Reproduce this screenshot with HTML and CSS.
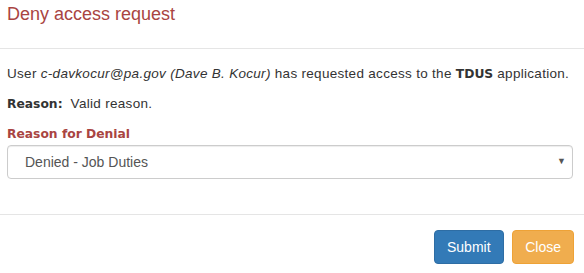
FILE: index.html
```html
<!DOCTYPE html>
<html lang="en">
<head>
    <meta charset="UTF-8">
    <title>Deny access request</title>
    <link rel="stylesheet" href="styles.css">
</head>
<body>
    <div class="modal">
        <div class="modal-header">
            <h4 class="modal-title">Deny access request</h4>
        </div>
        <div class="modal-body">
            <p class="request">User <em>c-davkocur@pa.gov (Dave B. Kocur)</em> has requested access to the <strong>TDUS</strong> application.</p>
            <p class="reason"><strong>Reason:</strong> Valid reason.</p>
            <label class="denial-label" for="denial">Reason for Denial</label>
            <div class="select-wrap">
                <select class="form-control" id="denial">
                    <option>Denied - Job Duties</option>
                </select>
                <span class="caret">&#9660;</span>
            </div>
        </div>
        <div class="modal-footer">
            <button class="btn btn-primary">Submit</button>
            <button class="btn btn-warning">Close</button>
        </div>
    </div>
</body>
</html>
```

FILE: styles.css
```css
body {
    margin: 0;
    font-family: 'Liberation Sans', Arial, sans-serif;
    font-size: 13px;
    color: #333;
    background-color: #fff;
}

.modal {
    width: 584px;
    height: 273px;
    background-color: #fff;
}

.modal-header {
    height: 48px;
    padding: 0 10px 0 7px;
    border-bottom: 1px solid #e5e5e5;
}

.modal-title {
    margin: 0;
    padding-top: 4px;
    font-size: 18px;
    font-weight: normal;
    line-height: 20px;
    color: #a94442;
}

.modal-body {
    height: 165px;
    padding: 0 11px 0 7px;
    border-bottom: 1px solid #e5e5e5;
}

.request,
.reason {
    margin: 0;
    height: 15px;
    font-size: 13.5px;
    line-height: 15px;
    letter-spacing: 0.3px;
}

.request {
    padding-top: 17px;
}

.reason {
    padding-top: 15px;
}

.reason strong {
    margin-right: 4px;
}

strong,
.denial-label {
    font-family: 'DejaVu Sans', Verdana, sans-serif;
    font-size: 12.3px;
    font-weight: bold;
    line-height: 1;
    letter-spacing: 0;
}

.denial-label {
    display: block;
    height: 15px;
    margin-top: 16px;
    line-height: 15px;
    color: #a94442;
}

.select-wrap {
    position: relative;
    margin-top: 3px;
}

.form-control {
    display: block;
    width: 100%;
    height: 34px;
    padding: 0 12px 0 17px;
    font-family: 'Liberation Sans', Arial, sans-serif;
    font-size: 14px;
    color: #555;
    background-color: #fff;
    border: 1px solid #ccc;
    border-radius: 4px;
    box-shadow: inset 0 1px 1px rgba(0, 0, 0, 0.075);
    -webkit-appearance: none;
    appearance: none;
}

.caret {
    position: absolute;
    right: 7px;
    top: 11px;
    font-size: 9px;
    color: #555;
    pointer-events: none;
}

.modal-footer {
    padding: 15px 10px 0 7px;
    text-align: right;
}

.btn {
    display: inline-block;
    height: 34px;
    padding: 6px 12px;
    font-family: 'Liberation Sans', Arial, sans-serif;
    font-size: 14px;
    line-height: 20px;
    color: #fff;
    border: 1px solid transparent;
    border-radius: 4px;
    cursor: pointer;
}

.btn + .btn {
    margin-left: 5px;
}

.btn-primary {
    background-color: #337ab7;
    border-color: #2e6da4;
}

.btn-warning {
    background-color: #f0ad4e;
    border-color: #eea236;
}
```
